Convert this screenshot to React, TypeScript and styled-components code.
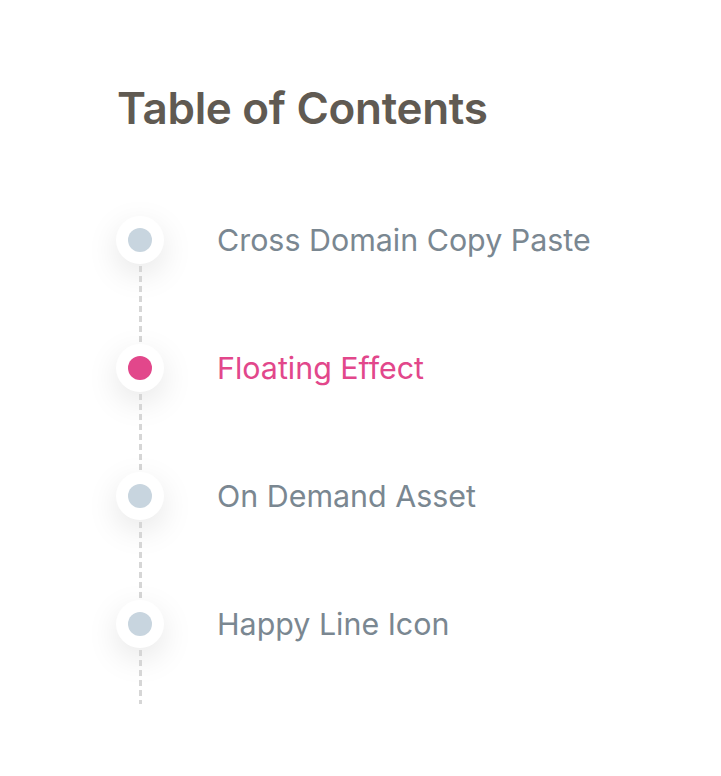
import * as React from "react";
import styled, { createGlobalStyle } from "styled-components";

const GlobalStyle = createGlobalStyle`
  body {
    margin: 0;
    background: #ffffff;
    font-family: Inter, "Noto Sans", "Liberation Sans", sans-serif;
  }
`;

const Page = styled.div`
  padding: 82px 0 0 116px;
`;

const Title = styled.h2`
  margin: 0 0 82px 1px;
  font-size: 44px;
  line-height: 52px;
  font-weight: 600;
  color: #605a52;
  letter-spacing: -0.3px;
`;

const List = styled.ul`
  list-style: none;
  margin: 0;
  padding: 0;
`;

const Item = styled.li`
  display: flex;
  align-items: flex-start;
  gap: 53px;
`;

const Rail = styled.div`
  display: flex;
  flex-direction: column;
  align-items: center;
  width: 48px;
`;

const Marker = styled.span`
  display: flex;
  align-items: center;
  justify-content: center;
  width: 48px;
  height: 48px;
  border-radius: 50%;
  background: #ffffff;
  box-shadow: 0 10px 32px rgba(0, 0, 0, 0.1);
`;

const Dot = styled.span<{ $active?: boolean }>`
  width: 24px;
  height: 24px;
  border-radius: 50%;
  background: ${(p) => (p.$active ? "#e2478b" : "#c8d5df")};
`;

const Connector = styled.span<{ $len: number }>`
  width: 3px;
  height: ${(p) => p.$len}px;
  background: repeating-linear-gradient(
    to bottom,
    #d6d6d6 0 6px,
    transparent 6px 10px
  );
  margin-top: 2px;
`;

const Label = styled.a<{ $active?: boolean }>`
  line-height: 48px;
  font-size: 30.4px;
  font-weight: 400;
  color: ${(p) => (p.$active ? "#e2478b" : "#7a8791")};
  text-decoration: none;
  cursor: pointer;
`;

const sections = [
  "Cross Domain Copy Paste",
  "Floating Effect",
  "On Demand Asset",
  "Happy Line Icon",
];

const App = () => {
  const [active, setActive] = React.useState<number>(1);
  return (
    <Page>
      <GlobalStyle />
      <Title>Table of Contents</Title>
      <List>
        {sections.map((name, i) => (
          <Item key={name}>
            <Rail>
              <Marker>
                <Dot $active={i === active} />
              </Marker>
              <Connector $len={i === sections.length - 1 ? 54 : 78} />
            </Rail>
            <Label $active={i === active} onClick={() => setActive(i)}>
              {name}
            </Label>
          </Item>
        ))}
      </List>
    </Page>
  );
};

export default App;
